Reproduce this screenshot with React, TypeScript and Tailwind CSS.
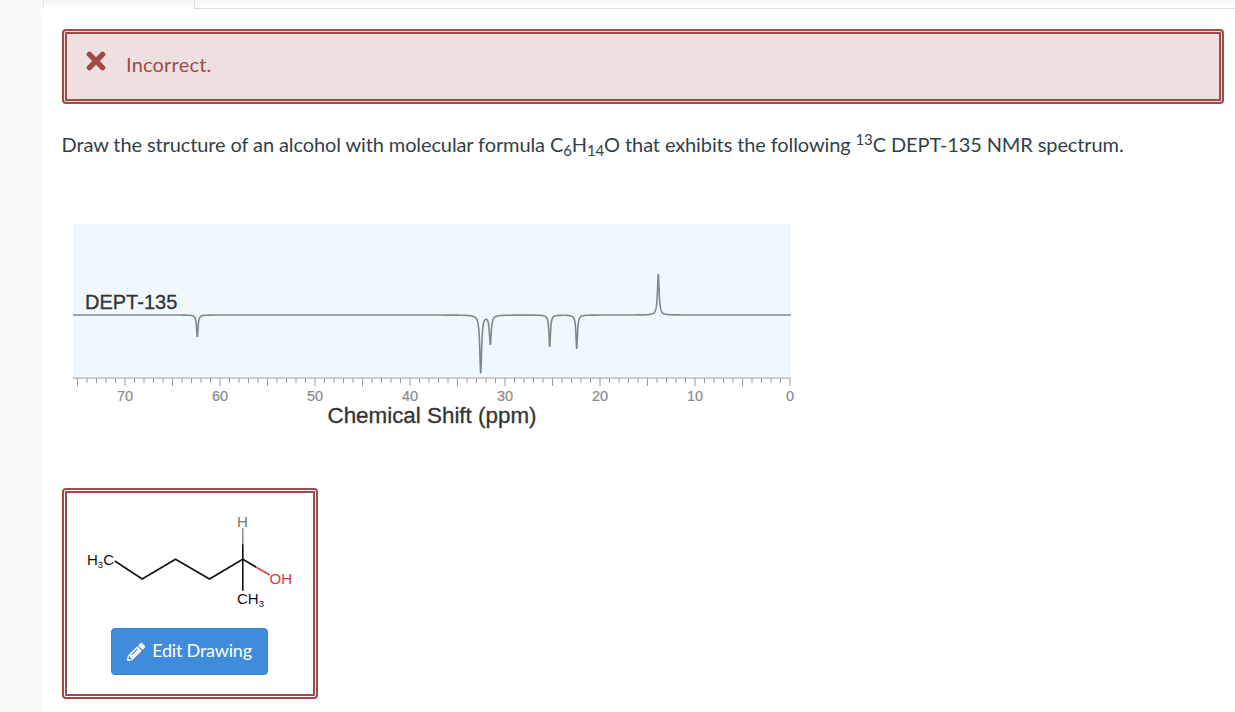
import { FaPencilAlt } from "react-icons/fa";

const sans = "'Liberation Sans', Arial, sans-serif";

function spectrumPath() {
  const peaks = [
    { x: 197.3, h: 22, w: 0.9 },
    { x: 480.7, h: 58, w: 1.1 },
    { x: 490.3, h: 29, w: 1.1 },
    { x: 549.7, h: 32, w: 0.9 },
    { x: 576.7, h: 34, w: 0.9 },
    { x: 658.3, h: -41, w: 1.0 },
  ];
  let d = "";
  for (let x = 73; x <= 791; x += 0.25) {
    let y = 315;
    for (const p of peaks) {
      const t = (x - p.x) / p.w;
      y += p.h / (1 + t * t);
    }
    d += `${d ? "L" : "M"}${x.toFixed(2)} ${y.toFixed(2)}`;
  }
  return d;
}

function Spectrum() {
  const ticks = [];
  for (let i = 0; i <= 75; i++) {
    const x = 790 - i * 9.5;
    ticks.push(
      <line key={i} x1={x} x2={x} y1={378} y2={i % 5 === 0 ? 386 : 383} stroke="#9a9a9a" strokeWidth={1} />
    );
  }
  const labels = [70, 60, 50, 40, 30, 20, 10, 0];
  return (
    <svg width={740} height={212} viewBox="73 224 740 212" className="block ml-[11.5px]" style={{ fontFamily: sans }}>
      <rect x={73} y={224} width={718} height={152} fill="#f0f7fd" />
      <text x={85} y={309} fontSize={20} fill="#333" stroke="#333" strokeWidth={0.3}>DEPT-135</text>
      <path d={spectrumPath()} fill="none" stroke="#7d8a8a" strokeWidth={1.6} />
      <line x1={73} x2={790.5} y1={378} y2={378} stroke="#9a9a9a" strokeWidth={1} />
      {ticks}
      {labels.map((l) => (
        <text key={l} x={790 - l * 9.5} y={401} fontSize={14.5} fill="#8a8a8a" stroke="#8a8a8a" strokeWidth={0.2} textAnchor="middle">{l}</text>
      ))}
      <text x={432} y={423} fontSize={22.4} fill="#333" stroke="#333" strokeWidth={0.3} textAnchor="middle">Chemical Shift (ppm)</text>
    </svg>
  );
}

function Molecule() {
  return (
    <svg width={246} height={110} viewBox="66.5 510 246 110" className="block" style={{ fontFamily: sans }}>
      <defs>
        <linearGradient id="hb" x1="0" y1="528" x2="0" y2="559" gradientUnits="userSpaceOnUse">
          <stop offset="0" stopColor="#9a9a9a" />
          <stop offset="0.5" stopColor="#8a8a8a" />
          <stop offset="0.55" stopColor="#111" />
        </linearGradient>
      </defs>
      <polyline points="114.3,561 141.7,579 175,559.3 209,579 242.3,559.3" fill="none" stroke="#111" strokeWidth={1.6} />
      <line x1={242.3} y1={528} x2={242.3} y2={559.3} stroke="url(#hb)" strokeWidth={1.6} />
      <line x1={242.3} y1={559.3} x2={242.3} y2={590.7} stroke="#111" strokeWidth={1.6} />
      <line x1={242.3} y1={559.3} x2={255.8} y2={567.2} stroke="#111" strokeWidth={1.6} />
      <line x1={255.8} y1={567.2} x2={269.3} y2={575} stroke="#d8413f" strokeWidth={1.6} />
      <text x={236.5} y={527} fontSize={15} fill="#777">H</text>
      <text x={86.5} y={565} fontSize={15} fill="#111">H<tspan fontSize={9.5} dy={3}>3</tspan><tspan dy={-3}>C</tspan></text>
      <text x={269} y={584} fontSize={15} fill="#e0324a">OH</text>
      <text x={236.5} y={604} fontSize={15} fill="#111">CH<tspan fontSize={9.5} dy={3}>3</tspan></text>
    </svg>
  );
}

export default function App() {
  return (
    <div className="flex h-[712px] overflow-hidden bg-white text-[#333]" style={{ fontFamily: "Lato, sans-serif" }}>
      <div className="w-[43px] shrink-0 bg-[#fafafa]" />
      <div className="flex-1 min-w-0">
        <div className="flex h-[9px]">
          <div className="w-[151px] border-l border-[#e4e4e4] bg-gradient-to-b from-[#f4f4f4] to-white" />
          <div className="flex-1 border-l border-b border-[#dcdcdc] bg-gradient-to-b from-[#f6f6f6] to-white" />
        </div>
        <div className="pl-[18.5px] pr-[11px] pt-[20px]">
          <div className="flex h-[75px] items-center rounded-[4px] border-[5px] border-double border-[#a04a4a] bg-[#f0dfdf] pl-[19px] pb-[5px] text-[#a04a4a]">
            <svg width={20} height={20} viewBox="0 0 20 20" className="-mt-[6px] shrink-0">
              <path d="M3.4 3.4L16.6 16.6M16.6 3.4L3.4 16.6" stroke="currentColor" strokeWidth={5.4} strokeLinecap="round" fill="none" />
            </svg>
            <span className="ml-[20.5px] text-[20px] leading-none tracking-[0.2px]">Incorrect.</span>
          </div>
          <p className="mt-[27px] h-[26px] whitespace-nowrap text-[20px] leading-[26px] tracking-[-0.11px] text-[#333f48]">
            Draw the structure of an alcohol with molecular formula C<sub className="text-[15px] leading-none">6</sub>H<sub className="text-[15px] leading-none">14</sub>O that exhibits the following <sup className="text-[15px] leading-none">13</sup>C DEPT-135 NMR spectrum.
          </p>
          <div className="mt-[67px]">
            <Spectrum />
          </div>
          <div className="mt-[52px] flex h-[211px] w-[256px] flex-col items-center rounded-[4px] border-[5px] border-double border-[#a04a4a]">
            <div className="mt-[17px] w-full"><Molecule /></div>
            <button className="mt-[8px] flex h-[47px] w-[157px] shrink-0 items-center justify-center gap-[7px] rounded-[4px] border border-[#3a80c8] bg-[#408bdb] pb-[2px] text-[18px] tracking-[-0.2px] text-white">
              <FaPencilAlt className="w-[18px] h-[18px] mt-[2px]" />
              Edit Drawing
            </button>
          </div>
        </div>
      </div>
    </div>
  );
}
